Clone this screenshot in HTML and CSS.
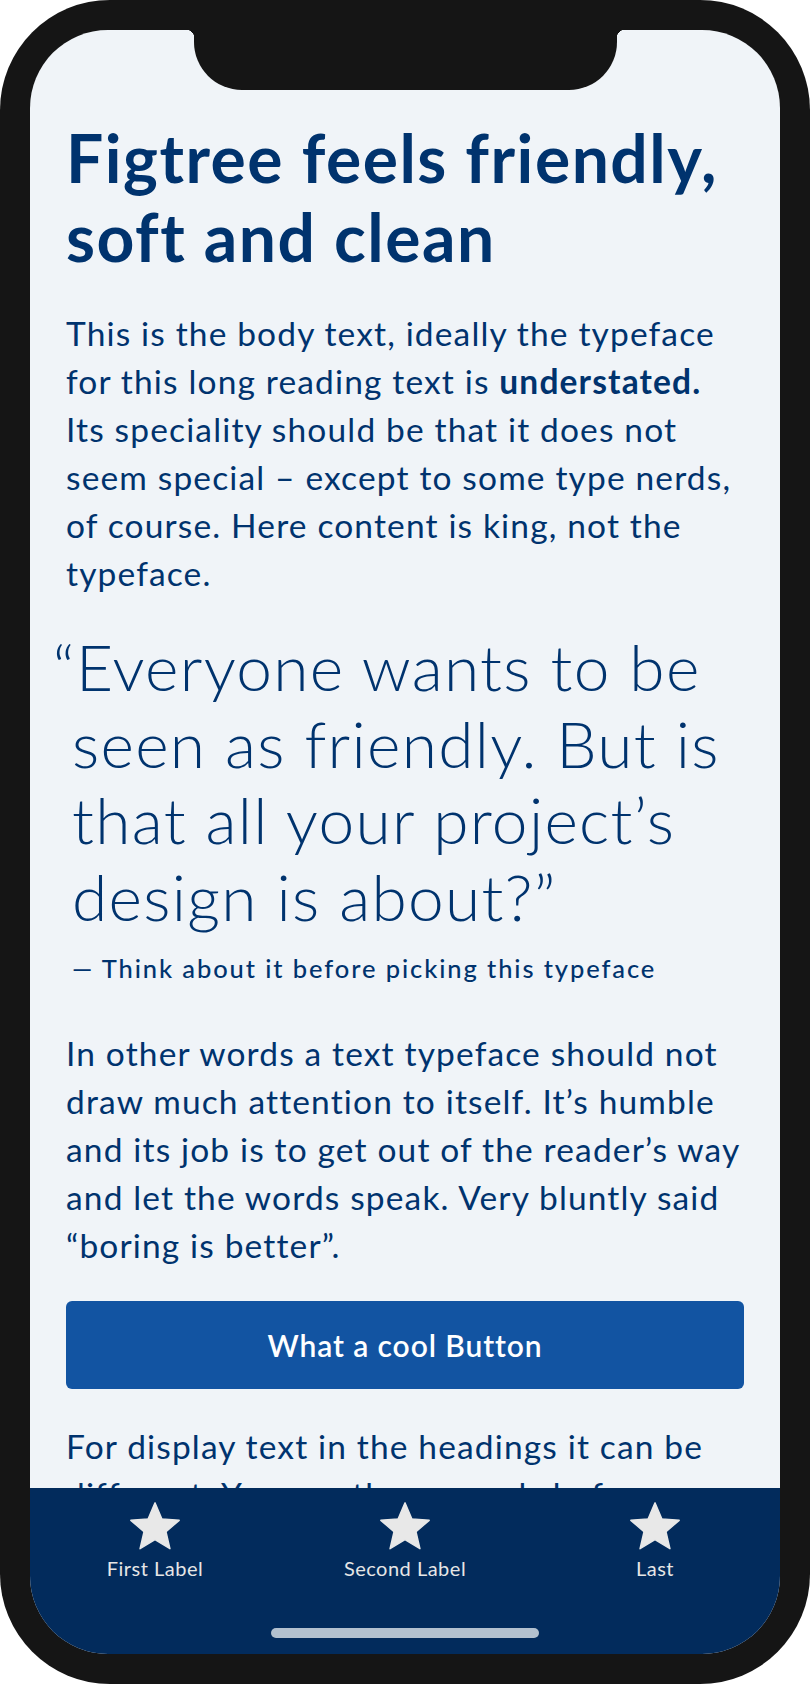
FILE: index.html
```html
<!DOCTYPE html>
<html lang="en">
<head>
<meta charset="utf-8">
<title>Figtree</title>
<link rel="stylesheet" href="styles.css">
</head>
<body>
<div class="phone">
  <div class="screen">
    <div class="notch"></div>
    <main class="content">
      <h1 class="title">Figtree feels friendly,<br>soft and clean</h1>
      <p class="body-text">This is the body text, ideally the typeface<br>for this long reading text is <strong>understated.</strong><br>Its speciality should be that it does not<br>seem special – except to some type nerds,<br>of course. Here content is king, not the<br>typeface.</p>
      <figure class="quote">
        <blockquote class="quote-text"><span class="hang">“</span>Everyone wants to be<br>seen as friendly. But is<br>that all your project’s<br>design is about?”</blockquote>
        <figcaption class="quote-source">— Think about it before picking this typeface</figcaption>
      </figure>
      <p class="body-text body-gap">In other words a text typeface should not<br>draw much attention to itself. It’s humble<br>and its job is to get out of the reader’s way<br>and let the words speak. Very bluntly said<br>“boring is better”.</p>
      <button class="cta" type="button">What a cool Button</button>
      <p class="body-text">For display text in the headings it can be<br>different. You see these words before you<br>start reading, so they may show a bit more<br>personality.</p>
    </main>
    <nav class="tabbar">
      <a class="tab" href="#">
        <svg class="tab-icon" viewBox="0 0 24 24"><path d="M12 17.27L18.18 21l-1.64-7.03L22 9.24l-7.19-.61L12 2 9.19 8.63 2 9.24l5.46 4.73L5.82 21z"/></svg>
        <span class="tab-label">First Label</span>
      </a>
      <a class="tab" href="#">
        <svg class="tab-icon" viewBox="0 0 24 24"><path d="M12 17.27L18.18 21l-1.64-7.03L22 9.24l-7.19-.61L12 2 9.19 8.63 2 9.24l5.46 4.73L5.82 21z"/></svg>
        <span class="tab-label">Second Label</span>
      </a>
      <a class="tab" href="#">
        <svg class="tab-icon" viewBox="0 0 24 24"><path d="M12 17.27L18.18 21l-1.64-7.03L22 9.24l-7.19-.61L12 2 9.19 8.63 2 9.24l5.46 4.73L5.82 21z"/></svg>
        <span class="tab-label">Last</span>
      </a>
    </nav>
    <div class="home-indicator"></div>
  </div>
</div>
</body>
</html>
```

FILE: styles.css
```css
html, body {
  margin: 0;
  padding: 0;
  background: #ffffff;
}

.phone {
  width: 810px;
  height: 1684px;
  box-sizing: border-box;
  padding: 30px;
  border-radius: 110px;
  background: #151515;
}

.screen {
  position: relative;
  width: 750px;
  height: 1624px;
  border-radius: 78px;
  background: #f0f4f8;
  overflow: hidden;
  font-family: Lato, "Open Sans", sans-serif;
  color: #00336e;
}

.notch {
  position: absolute;
  top: 0;
  left: 164px;
  width: 423px;
  height: 60px;
  background: #151515;
  border-radius: 0 0 48px 48px;
  z-index: 5;
}

.notch::before,
.notch::after {
  content: "";
  position: absolute;
  top: 0;
  width: 8px;
  height: 8px;
}

.notch::before {
  left: -8px;
  background: radial-gradient(circle at 0 100%, transparent 8px, #151515 8.5px);
}

.notch::after {
  right: -8px;
  background: radial-gradient(circle at 100% 100%, transparent 8px, #151515 8.5px);
}

.content {
  padding: 88px 36px 0;
}

.title {
  margin: 0;
  font-weight: 700;
  font-size: 66px;
  line-height: 79px;
  letter-spacing: 1.5px;
  white-space: nowrap;
}

.body-text {
  margin: 33px 0 0;
  font-weight: 400;
  font-size: 33.5px;
  line-height: 48px;
  letter-spacing: 1.15px;
  white-space: nowrap;
}

.body-text strong {
  font-weight: 700;
}

.quote {
  margin: 32px 0 0;
  padding-left: 6px;
}

.quote-text {
  margin: 0;
  font-weight: 300;
  font-size: 64px;
  line-height: 76.7px;
  letter-spacing: 1.3px;
  white-space: nowrap;
}

.hang {
  margin-left: -0.3em;
}

.quote-source {
  margin-top: 16px;
  font-weight: 500;
  font-size: 25.5px;
  line-height: 32px;
  letter-spacing: 1.9px;
  white-space: nowrap;
}

.body-gap {
  margin-top: 44.7px;
}

.cta {
  display: block;
  width: 100%;
  height: 88px;
  margin-top: 32px;
  border: 0;
  border-radius: 6px;
  background: #1254a2;
  color: #ffffff;
  font-family: Lato, "Open Sans", sans-serif;
  font-weight: 600;
  font-size: 30px;
  letter-spacing: 0.9px;
}

.tabbar {
  position: absolute;
  left: 0;
  right: 0;
  bottom: 0;
  height: 166px;
  box-sizing: border-box;
  padding-top: 10px;
  display: grid;
  grid-template-columns: repeat(3, 1fr);
  align-items: start;
  background: #022b5c;
  z-index: 4;
}

.tab {
  display: flex;
  flex-direction: column;
  align-items: center;
  text-decoration: none;
  color: #e6e6e6;
}

.tab-icon {
  width: 58px;
  height: 58px;
  fill: #e8e8e8;
  stroke: #e8e8e8;
  stroke-width: 0.6;
  stroke-linejoin: round;
}

.tab-label {
  font-size: 20px;
  line-height: 24px;
  font-weight: 400;
  letter-spacing: 0.5px;
}

.home-indicator {
  position: absolute;
  left: 241px;
  bottom: 16px;
  width: 268px;
  height: 10px;
  border-radius: 5px;
  background: #b3c1cf;
  z-index: 6;
}
```
